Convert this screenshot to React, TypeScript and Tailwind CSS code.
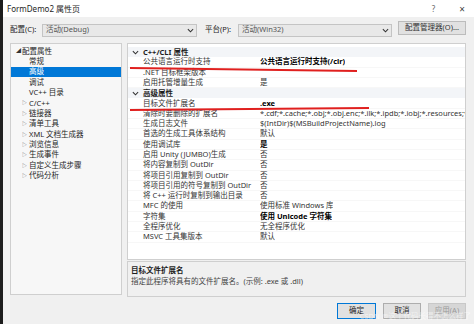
import React from "react";

const treeItems: { label: string; level: 0 | 1 | 2; kind: "open" | "closed" | "leaf"; selected?: boolean }[] = [
  { label: "配置属性", level: 0, kind: "open" },
  { label: "常规", level: 1, kind: "leaf" },
  { label: "高级", level: 1, kind: "leaf", selected: true },
  { label: "调试", level: 1, kind: "leaf" },
  { label: "VC++ 目录", level: 1, kind: "leaf" },
  { label: "C/C++", level: 1, kind: "closed" },
  { label: "链接器", level: 1, kind: "closed" },
  { label: "清单工具", level: 1, kind: "closed" },
  { label: "XML 文档生成器", level: 1, kind: "closed" },
  { label: "浏览信息", level: 1, kind: "closed" },
  { label: "生成事件", level: 1, kind: "closed" },
  { label: "自定义生成步骤", level: 1, kind: "closed" },
  { label: "代码分析", level: 1, kind: "closed" },
];

type Row = { header?: boolean; name: string; value?: string; bold?: boolean };

const rows: Row[] = [
  { header: true, name: "C++/CLI 属性" },
  { name: "公共语言运行时支持", value: "公共语言运行时支持(/clr)", bold: true },
  { name: ".NET 目标框架版本", value: "" },
  { name: "启用托管增量生成", value: "是" },
  { header: true, name: "高级属性" },
  { name: "目标文件扩展名", value: ".exe", bold: true },
  { name: "清除时要删除的扩展名", value: "*.cdf;*.cache;*.obj;*.obj.enc;*.ilk;*.ipdb;*.iobj;*.resources;*.tlb;*.tli;*.tlh" },
  { name: "生成日志文件", value: "$(IntDir)$(MSBuildProjectName).log" },
  { name: "首选的生成工具体系结构", value: "默认" },
  { name: "使用调试库", value: "是", bold: true },
  { name: "启用 Unity (JUMBO)生成", value: "否" },
  { name: "将内容复制到 OutDir", value: "否" },
  { name: "将项目引用复制到 OutDir", value: "否" },
  { name: "将项目引用的符号复制到 OutDir", value: "否" },
  { name: "将 C++ 运行时复制到输出目录", value: "否" },
  { name: "MFC 的使用", value: "使用标准 Windows 库" },
  { name: "字符集", value: "使用 Unicode 字符集", bold: true },
  { name: "全程序优化", value: "无全程序优化" },
  { name: "MSVC 工具集版本", value: "默认" },
];

function Chevron() {
  return (
    <svg width="7" height="7" viewBox="0 0 8 8" className="shrink-0">
      <path d="M1 2.5 L4 5.5 L7 2.5" fill="none" stroke="#333" strokeWidth="1.2" />
    </svg>
  );
}

export default function App() {
  return (
    <div
      className="relative w-[474px] h-[324px] overflow-hidden bg-[#f0f0f0] text-[#1e1e1e] flex"
      style={{ fontFamily: '"Noto Sans", "Noto Sans CJK SC", sans-serif' }}
    >
      <div className="w-[3px] h-full bg-[#1c1c1c] shrink-0" />
      <div className="flex-1 min-w-0 flex flex-col">
        {/* title bar */}
        <div className="h-[17px] bg-white flex items-center pl-[4px] pr-[9px] text-[8px]">
          <span className="flex-1">FormDemo2 属性页</span>
          <span className="text-[8px] text-[#666] mr-[24px]">?</span>
          <span className="text-[10px] text-[#444] leading-none">×</span>
        </div>

        {/* config row */}
        <div className="h-[26px] flex items-center text-[7.5px] pl-[7px] pr-[3px]">
          <span className="w-[32px]">配置(C):</span>
          <div className="w-[155px] h-[13px] border border-[#c4c4c4] bg-[#e8e8e8] flex items-center pl-[3px] pr-[2px]">
            <span className="flex-1 text-[#555]">活动(Debug)</span>
            <Chevron />
          </div>
          <span className="ml-[8px] w-[33px]">平台(P):</span>
          <div className="w-[154px] h-[13px] border border-[#c4c4c4] bg-[#e8e8e8] flex items-center pl-[3px] pr-[2px]">
            <span className="flex-1 text-[#555]">活动(Win32)</span>
            <Chevron />
          </div>
          <div className="ml-[6px] w-[68px] h-[14px] mb-[5px] border border-[#bcbcbc] bg-[#e1e1e1] flex items-center justify-center text-[#333]">
            配置管理器(O)...
          </div>
        </div>

        {/* main */}
        <div className="flex pl-[7px] pr-[8px] gap-[5px]">
          {/* tree */}
          <div className="w-[112px] shrink-0 h-[252px] border border-[#cfcfcf] bg-[#f7f7f7] pt-[2px] text-[7.5px]">
            {treeItems.map((t) => (
              <div
                key={t.label}
                className={`h-[10.4px] flex items-center ${t.selected ? "bg-[#0078d7] text-white" : ""}`}
              >
                <span className={t.level === 0 ? "w-[10px]" : "w-[17px]"} />
                {t.kind === "open" && <span className="text-[5px] text-[#333] w-[6px] -ml-[5px] mr-[-1px]">◢</span>}
                {t.kind === "closed" && <span className="text-[5px] text-[#666] w-[6px] -ml-[6px]">▷</span>}
                <span className="ml-[1px]">{t.label}</span>
              </div>
            ))}
          </div>

          {/* properties + description */}
          <div className="flex-1 min-w-0 flex flex-col">
            <div className="h-[217px] border border-[#cfcfcf] bg-white pt-[3px] text-[7.5px] overflow-hidden">
              {rows.map((r) =>
                r.header ? (
                  <div key={r.name} className="h-[10.3px] flex items-center bg-[#f3f5f8] pl-[4px]">
                    <span className="w-[11px] flex">
                      <Chevron />
                    </span>
                    <span className="font-bold">{r.name}</span>
                  </div>
                ) : (
                  <div key={r.name} className="h-[10.3px] flex items-center border-b border-[#f7f7f7]">
                    <span className="w-[132px] shrink-0 pl-[15px] whitespace-nowrap text-[#333]">{r.name}</span>
                    <span className={`min-w-0 overflow-hidden whitespace-nowrap ${r.bold ? "font-bold text-black" : "text-[#333]"}`}>
                      {r.value}
                    </span>
                  </div>
                )
              )}
            </div>
            <div className="mt-[1px] h-[36px] border border-[#cfcfcf] bg-[#f0f0f0] px-[3px] pt-[3px] text-[7.5px] leading-[11px]">
              <div className="font-bold">目标文件扩展名</div>
              <div className="text-[#444]">指定此程序将具有的文件扩展名。(示例: .exe 或 .dll)</div>
            </div>
          </div>
        </div>

        {/* buttons */}
        <div className="flex justify-end gap-[7px] pr-[8px] mt-[6px] text-[7.5px]">
          <div className="w-[39px] h-[16px] border border-[#0078d7] bg-[#e1e1e1] flex items-center justify-center">确定</div>
          <div className="w-[38px] h-[16px] border border-[#adadad] bg-[#e1e1e1] flex items-center justify-center">取消</div>
          <div className="w-[38px] h-[16px] border border-[#c8c8c8] bg-[#d6d6d6] flex items-center justify-center text-[#9a9a9a]">
            应用(A)
          </div>
        </div>
      </div>

      {/* annotations */}
      <svg className="absolute inset-0 pointer-events-none" width="474" height="324">
        <path d="M130 68 Q 240 69 357 71" fill="none" stroke="#e0201f" strokeWidth="2" />
        <path d="M130 110 Q 250 109 369 108" fill="none" stroke="#e0201f" strokeWidth="2" />
      </svg>
      <div className="absolute right-[3px] bottom-[2px] text-[7.5px] text-white/60 whitespace-nowrap">
        CSDN @这个代码长得不怎么样了
      </div>
    </div>
  );
}
